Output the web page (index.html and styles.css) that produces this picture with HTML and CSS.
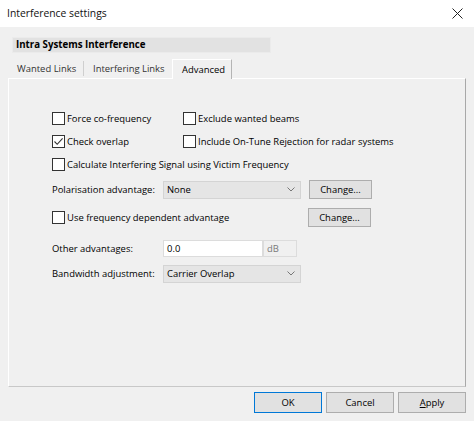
FILE: index.html
```html
<!DOCTYPE html>
<html>
<head>
<meta charset="utf-8">
<link rel="stylesheet" href="styles.css">
</head>
<body>
<div class="window">
  <div class="titlebar">
    <span class="title">Interference settings</span>
    <svg class="close" width="11" height="11" viewBox="0 0 11 11"><path d="M0.5 0.5L10.5 10.5M10.5 0.5L0.5 10.5" stroke="#222" stroke-width="1" fill="none"/></svg>
  </div>
  <div class="client">
    <div class="header">Intra Systems Interference</div>
    <div class="tabs">
      <div class="tab t1">Wanted Links</div>
      <div class="tab t2">Interfering Links</div>
      <div class="tab active">Advanced</div>
    </div>
    <div class="panel">
      <div class="row r1">
        <label class="cb c1"><span class="box"></span>Force co-frequency</label>
        <label class="cb"><span class="box"></span>Exclude wanted beams</label>
      </div>
      <div class="row">
        <label class="cb c1"><span class="box checked"><svg width="11" height="11" viewBox="0 0 11 11"><path d="M1.5 5.5L4.2 8.3L9.6 2.4" stroke="#333" stroke-width="1.1" fill="none"/></svg></span>Check overlap</label>
        <label class="cb"><span class="box"></span>Include On-Tune Rejection for radar systems</label>
      </div>
      <div class="row">
        <label class="cb"><span class="box"></span>Calculate Interfering Signal using Victim Frequency</label>
      </div>
      <div class="row r4">
        <span class="lbl">Polarisation advantage:</span>
        <div class="select">None<svg class="chev" width="8" height="5" viewBox="0 0 8 5"><path d="M0.5 0.5L4 4L7.5 0.5" stroke="#777" fill="none"/></svg></div>
        <button class="btn change">Change...</button>
      </div>
      <div class="row r5">
        <label class="cb wide"><span class="box"></span>Use frequency dependent advantage</label>
        <button class="btn change">Change...</button>
      </div>
      <div class="row r6">
        <span class="lbl">Other advantages:</span>
        <div class="input">0.0</div>
        <div class="unit">dB</div>
      </div>
      <div class="row r7">
        <span class="lbl">Bandwidth adjustment:</span>
        <div class="select">Carrier Overlap<svg class="chev" width="8" height="5" viewBox="0 0 8 5"><path d="M0.5 0.5L4 4L7.5 0.5" stroke="#777" fill="none"/></svg></div>
      </div>
    </div>
    <div class="footer">
      <button class="btn dlg default">OK</button>
      <button class="btn dlg">Cancel</button>
      <button class="btn dlg"><u>A</u>pply</button>
    </div>
  </div>
</div>
</body>
</html>
```
FILE: styles.css
```css
html, body {
  margin: 0;
  padding: 0;
  background: #f0f0f0;
}
body {
  font-family: "Open Sans", "Noto Sans", sans-serif;
  font-size: 9.45px;
  color: #000;
  width: 474px;
  height: 421px;
  overflow: hidden;
}
.window {
  width: 474px;
  height: 421px;
  display: flex;
  flex-direction: column;
}
.titlebar {
  height: 27px;
  background: #fff;
  display: flex;
  align-items: center;
  justify-content: space-between;
  padding: 0 11px 0 7px;
  font-size: 10.35px;
}
.title {
  margin-top: -1px;
  color: #111;
}
.close {
  margin-top: -1px;
}
.client {
  flex: 1;
  padding: 10px 0 0 8px;
  display: flex;
  flex-direction: column;
}
.header {
  margin-left: 4px;
  width: 254px;
  height: 14px;
  line-height: 14px;
  background: #e2e2e2;
  border: 1px solid #ebebeb;
  padding-left: 3px;
  font-weight: 700;
  font-size: 9.7px;
  white-space: nowrap;
}
.tabs {
  margin-top: 5px;
  height: 20px;
  display: flex;
  align-items: flex-end;
  white-space: nowrap;
}
.tab {
  height: 15px;
  line-height: 15px;
  margin-bottom: 2px;
  padding-left: 9px;
  color: #333;
  box-sizing: border-box;
  overflow: hidden;
}
.t1 { width: 75px; }
.t2 {
  width: 89px;
  border-left: 1px solid #cfcfcf;
}
.tab.active {
  width: 60px;
  margin-bottom: -1px;
  height: 20px;
  line-height: 19px;
  border-top: 1px solid #fff;
  border-left: 1px solid #fff;
  border-right: 1px solid #b4b4b4;
  background: #f0f0f0;
  color: #000;
  position: relative;
  z-index: 1;
  padding-left: 9px;
}
.panel {
  width: 458px;
  height: 309px;
  box-sizing: border-box;
  border-top: 1px solid #fff;
  border-left: 1px solid #fff;
  border-right: 1px solid #a8a8a8;
  border-bottom: 1px solid #c8c8c8;
  padding: 28px 0 0 43px;
  display: flex;
  flex-direction: column;
}
.row {
  height: 23px;
  display: flex;
  align-items: center;
  white-space: nowrap;
}
.r4 { margin-top: 2px; }
.r5 { margin-top: 5px; }
.r6 { margin-top: 8px; }
.r7 { margin-top: 2px; }
.cb {
  display: flex;
  align-items: center;
  white-space: nowrap;
  flex-shrink: 0;
}
.c1 { width: 131px; }
.wide { width: 248px; }
.box {
  width: 11px;
  height: 11px;
  border: 1px solid #333;
  background: #fff;
  margin-right: 2px;
  display: flex;
  align-items: center;
  justify-content: center;
  flex-shrink: 0;
}
.lbl {
  width: 111px;
  flex-shrink: 0;
}
.select {
  width: 133px;
  height: 16px;
  line-height: 16px;
  background: #e5e5e5;
  border: 1px solid #d4d4d4;
  padding-left: 3px;
  display: flex;
  align-items: center;
  justify-content: space-between;
  flex-shrink: 0;
}
.chev {
  margin-right: 5px;
}
.btn {
  font-family: inherit;
  font-size: 9.45px;
  background: #e1e1e1;
  border: 1px solid #adadad;
  color: #000;
  padding: 0;
  margin: 0;
}
.change {
  width: 63px;
  height: 19px;
  margin-left: 8px;
  flex-shrink: 0;
}
.input {
  width: 95px;
  height: 15px;
  line-height: 15px;
  background: #fff;
  border: 1px solid #dcdcdc;
  padding-left: 3px;
}
.unit {
  width: 29px;
  height: 15px;
  line-height: 15px;
  border: 1px solid #dcdcdc;
  padding-left: 3px;
  color: #7a7a7a;
}
.footer {
  margin-top: 5px;
  display: flex;
  justify-content: flex-end;
  gap: 4px;
  padding-right: 8px;
}
.dlg {
  width: 68px;
  height: 21px;
}
.dlg.default {
  border: 1px solid #0078d7;
}
.btn u {
  text-decoration: underline;
}
```
